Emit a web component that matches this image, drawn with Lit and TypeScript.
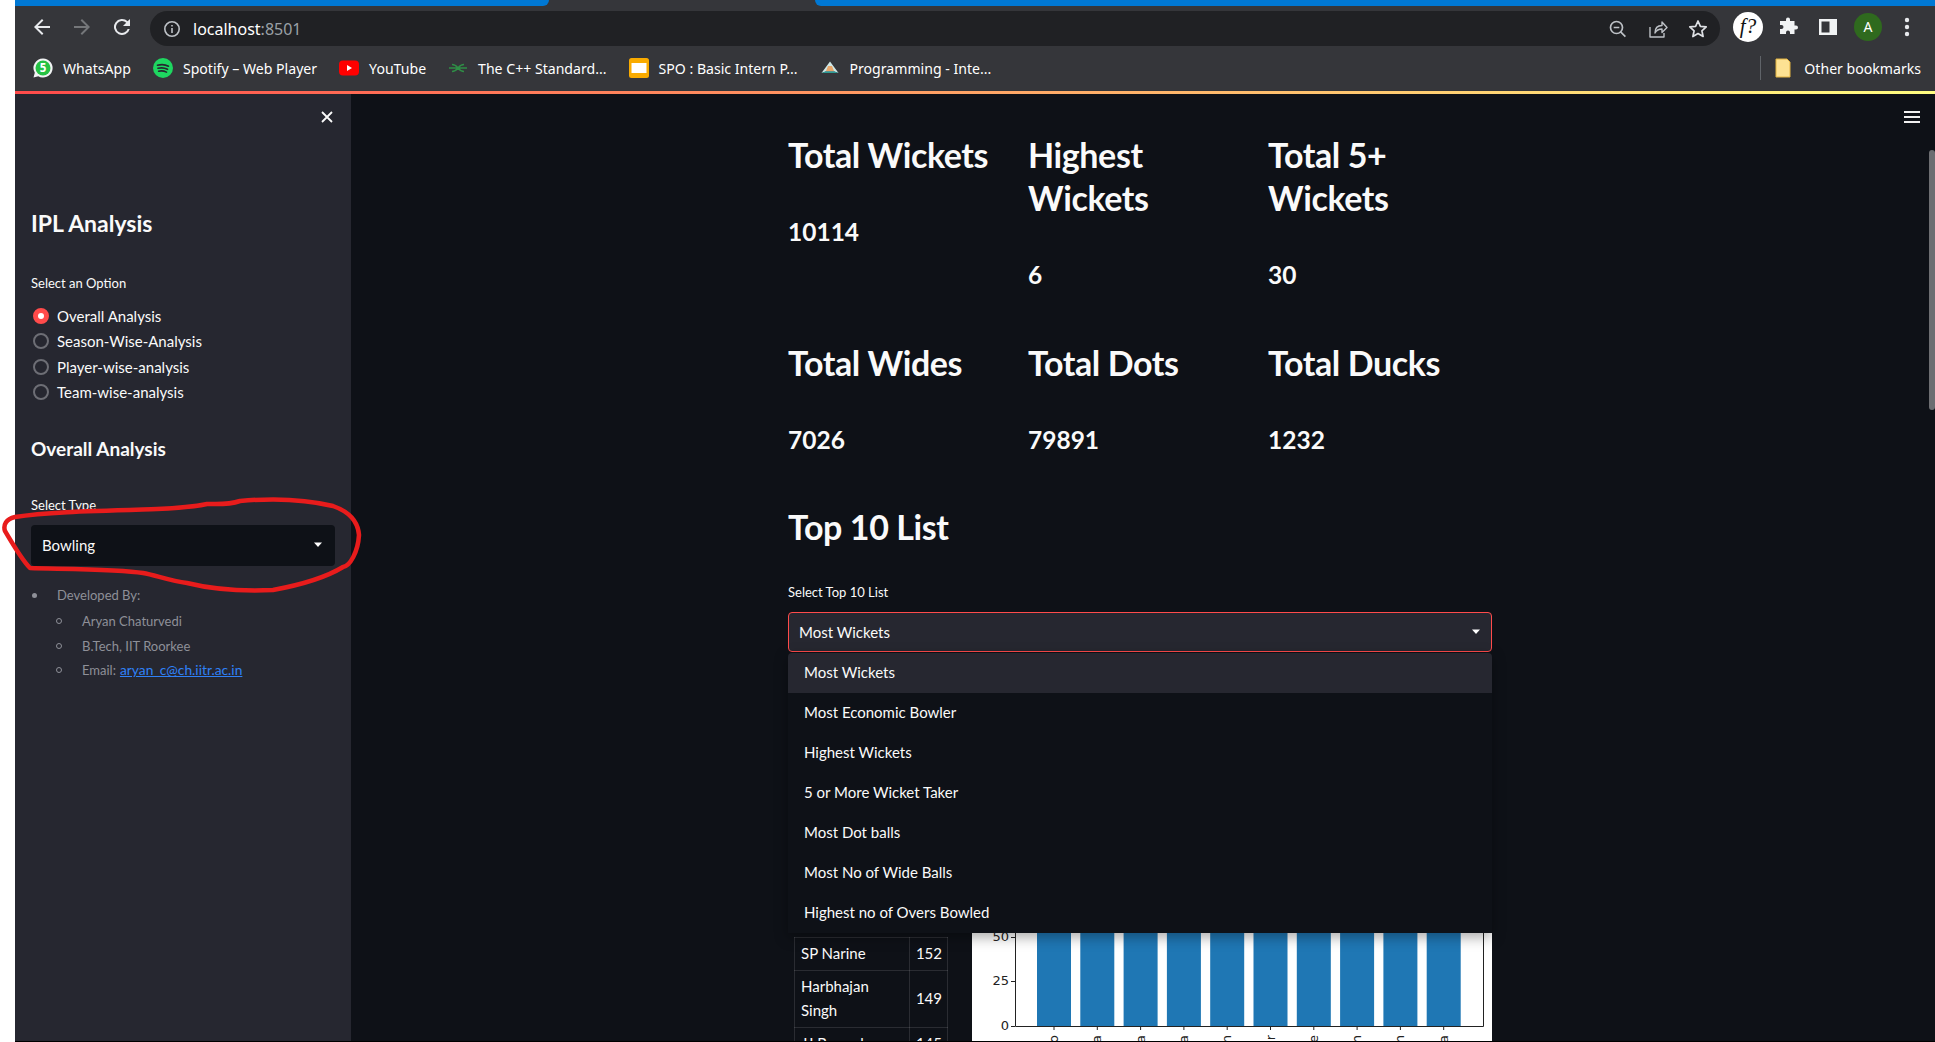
import { LitElement, html, css, svg } from 'lit';
import { customElement } from 'lit/decorators.js';

const radios = ['Overall Analysis', 'Season-Wise-Analysis', 'Player-wise-analysis', 'Team-wise-analysis'];
const options = ['Most Wickets', 'Most Economic Bowler', 'Highest Wickets', '5 or More Wicket Taker', 'Most Dot balls', 'Most No of Wide Balls', 'Highest no of Overs Bowled'];
const stats = [
	{ label: 'Total Wickets', value: '10114' },
	{ label: 'Highest Wickets', value: '6' },
	{ label: 'Total 5+ Wickets', value: '30' },
	{ label: 'Total Wides', value: '7026' },
	{ label: 'Total Dots', value: '79891' },
	{ label: 'Total Ducks', value: '1232' },
];
const players = ['DJ Bravo', 'SL Malinga', 'A Mishra', 'PP Chawla', 'R Ashwin', 'B Kumar', 'SP Narine', 'Harbhajan Singh', 'JJ Bumrah', 'RA Jadeja'];

const caret = html`<svg class="caret" width="10" height="6" viewBox="0 0 10 6"><path d="M1 0.5h8L5 5z" fill="#fff"/></svg>`;

@customElement('app-root')
export class AppRoot extends LitElement {
	static styles = css`
		:host {
			display: block;
			width: 1935px;
			height: 1042px;
			padding-left: 15px;
			box-sizing: border-box;
			background: #fff;
			overflow: hidden;
			font-family: "Lato", "Liberation Sans", sans-serif;
		}
		.frame { display: flex; flex-direction: column; height: 100%; position: relative; }

		.tabs { display: flex; justify-content: space-between; height: 6px; background: #35363a; flex: none; }
		.tab-l { width: 534px; background: #0078d4; border-bottom-right-radius: 7px; }
		.tab-r { width: 1120px; background: #0078d4; border-bottom-left-radius: 7px; }

		.toolbar { display: flex; align-items: center; height: 41px; background: #35363a; padding: 0 13px 0 15px; flex: none; }
		.nav { display: flex; gap: 16px; margin-right: 16px; }
		.nav svg { display: block; }
		.address { flex: 1; height: 35px; margin-top: 5px; margin-bottom: 1px; background: #202124; border-radius: 18px; display: flex; align-items: center; padding: 0 11px 0 13px; color: #fff; font: 16px "Noto Sans", sans-serif; }
		.address .port { color: #9aa0a6; }
		.address .host { margin-left: 12px; }
		.addr-right { margin-left: auto; display: flex; gap: 18px; }
		.ext { display: flex; gap: 10px; margin-left: 13px; align-items: center; }
		.ext-item { width: 30px; height: 30px; display: flex; align-items: center; justify-content: center; }
		.fq { background: #fff; border-radius: 50%; color: #111; font: italic 21px "Liberation Serif", serif; }
		.avatar { width: 28px; height: 28px; background: #2f6a1e; border-radius: 50%; color: #fff; font: 14px "Noto Sans", sans-serif; margin: 0 0 0 1px; }

		.bookmarks { display: flex; align-items: center; box-sizing: border-box; height: 44px; background: #35363a; padding: 0 0 2px 18px; color: #fff; font: 14.100px "Noto Sans", sans-serif; flex: none; }
		.bm { display: flex; align-items: center; gap: 10px; margin-right: 22px; white-space: nowrap; }
		.bm svg { display: block; flex: none; }
		.bm-other { margin: 0 14px 0 auto; display: flex; align-items: center; gap: 13px; }
		.bm-sep { width: 1px; height: 24px; background: #5f6368; margin-right: 1px; }

		.deco { height: 3px; flex: none; background: linear-gradient(90deg, #ff4b4b, #fffd80); }

		.workspace { flex: 1; display: flex; min-height: 0; color: #fafafa; }
		.sidebar { width: 336px; flex: none; box-sizing: border-box; background: #262730; padding: 13px 16px 0 16px; }
		.close { display: flex; justify-content: flex-end; margin-right: -2px; }
		.close svg { display: block; }
		.sb-title { margin: 81px 0 0; font-size: 23px; line-height: 30px; font-weight: 700; }
		.sb-label { font-size: 13px; line-height: 20px; }
		.sb-label.first { margin-top: 35px; }
		.radios { margin-top: 10px; }
		.radio { display: flex; align-items: center; height: 25.5px; margin-left: 2px; font-size: 15px; gap: 8px; }
		.dot { width: 16px; height: 16px; box-sizing: border-box; border-radius: 50%; border: 2px solid #6d6e75; display: flex; align-items: center; justify-content: center; }
		.dot.on { background: #ff4b4b; border-color: #ff4b4b; }
		.dot.on::after { content: ""; width: 6px; height: 6px; background: #fff; border-radius: 50%; }
		.sb-sub { margin: 31px 0 0; font-size: 19px; line-height: 26px; font-weight: 700; }
		.sb-label.second { margin-top: 33px; }
		.select { display: flex; align-items: center; justify-content: space-between; box-sizing: border-box; margin-top: 10px; border-radius: 4px; font-size: 15px; }
		.sb-select { height: 41px; background: #0e1117; padding: 0 12px 2px 11px; }
		.credits { list-style: none; margin: 19px 0 0; padding: 0; color: #8e9098; font-size: 13px; line-height: 20px; }
		.credits li { display: flex; align-items: center; }
		.credits .lead { height: 20px; }
		.credits .lead::before { content: ""; width: 5px; height: 5px; border-radius: 50%; background: #8e9098; margin: 0 20px 0 1px; }
		.credits .sub { height: 24.5px; }
		.credits .sub::before { content: ""; width: 6px; height: 6px; box-sizing: border-box; border-radius: 50%; border: 1.5px solid #8e9098; margin: 0 20px 0 25px; }
		.credits .first-sub { margin-top: 4px; }
		.credits a { color: #2f81f7; text-decoration: underline; margin-left: 4px; font-size: 13.800px; }

		.main { flex: 1; position: relative; background: #0e1117; overflow: hidden; }
		.content { width: 704px; margin-left: 437px; padding-top: 39px; }
		.stats { display: grid; grid-template-columns: repeat(3, 1fr); column-gap: 16px; row-gap: 51px; }
		.stat h2 { margin: 0; font-size: 34px; line-height: 43px; font-weight: 700; letter-spacing: -0.4px; }
		.stat p { margin: 41px 0 0; font-size: 24.500px; line-height: 30px; font-weight: 700; }
		.top { margin: 50px 0 0; font-size: 34px; line-height: 43px; font-weight: 700; letter-spacing: -0.4px; }
		.top-label { margin-top: 34px; font-size: 13px; line-height: 20px; }
		.top-select { height: 40px; background: #262730; border: 1px solid #ff4b4b; padding: 0 10px 0 10px; }
		.options { position: relative; z-index: 1; margin-top: 1px; background: #0e1117; border-radius: 4px 4px 0 0; box-shadow: 0 4px 14px rgba(0, 0, 0, 0.35); overflow: hidden; }
		.option { box-sizing: border-box; height: 40px; display: flex; align-items: center; padding: 0 0 2px 16px; font-size: 15px; }
		.option.on { background: #262730; }
		.result { display: flex; justify-content: space-between; align-items: flex-start; }
		table { border-collapse: collapse; margin: 4px 0 0 6px; width: 154px; font-size: 15px; line-height: 24px; }
		td { border: 1px solid rgba(250, 250, 250, 0.12); padding: 3px 5px 5px 6px; }
		td:last-child { width: 26px; text-align: right; }
		.chart { display: block; background: #fff; }
		.chart text { font-family: "DejaVu Sans", sans-serif; font-size: 13px; fill: #222; }

		.menu { position: absolute; top: 17px; right: 15px; display: block; }
		.scroll { position: absolute; top: 56px; right: 0; width: 6px; height: 260px; background: #6d6e72; border-radius: 3px; }
		.base { position: absolute; left: 0; right: 0; bottom: 0; height: 1px; background: #000; z-index: 2; }
		.circle { position: absolute; left: -15px; top: 0; width: 400px; height: 700px; pointer-events: none; z-index: 3; }
	`;

	render() {
		return html`
			<div class="frame">
				<div class="tabs"><div class="tab-l"></div><div class="tab-r"></div></div>
				${this.renderToolbar()}
				${this.renderBookmarks()}
				<div class="deco"></div>
				<div class="workspace">
					${this.renderSidebar()}
					${this.renderMain()}
				</div>
				<div class="base"></div>
				<svg class="circle" viewBox="0 0 400 700">
					<path d="M15 517C45 512 90 511 157 509C180 508 197 506 207 504C220 504 228 505 240 501C262 499 300 498 333 506C350 512 358 522 359 535C358 552 350 566 343 567C325 578 300 585 273 590C250 591 215 590 187 583C170 581 155 575 143 573C120 569 60 569 30 568C22 560 15 548 5 531C3 525 6 519 15 517Z" fill="none" stroke="#e81c1c" stroke-width="4.500" stroke-linejoin="round"/>
				</svg>
			</div>
		`;
	}

	renderToolbar() {
		return html`
			<div class="toolbar">
				<div class="nav">
					<svg width="24" height="24" viewBox="0 0 24 24"><path d="M20 11H7.8l5.6-5.6L12 4l-8 8 8 8 1.4-1.4L7.8 13H20z" fill="#e8eaed"/></svg>
					<svg width="24" height="24" viewBox="0 0 24 24"><path d="M4 11h12.2l-5.6-5.6L12 4l8 8-8 8-1.4-1.4 5.6-5.6H4z" fill="#75777a"/></svg>
					<svg width="24" height="24" viewBox="0 0 24 24"><path d="M17.65 6.35A8 8 0 1 0 19.74 14h-2.08a6 6 0 1 1-1.42-6.24L13 11h7V4z" fill="#e8eaed"/></svg>
				</div>
				<div class="address">
					<svg width="18" height="18" viewBox="0 0 18 18"><circle cx="9" cy="9" r="7.2" fill="none" stroke="#bdc1c6" stroke-width="1.6"/><path d="M8.2 8h1.6v5H8.2zM8.2 5h1.6v1.6H8.2z" fill="#bdc1c6"/></svg>
					<span class="host">localhost<span class="port">:8501</span></span>
					<div class="addr-right">
						<svg width="22" height="22" viewBox="0 0 22 22"><circle cx="9.5" cy="9.5" r="6" fill="none" stroke="#bdc1c6" stroke-width="1.7"/><path d="M6.7 8.7h5.6v1.6H6.7zM14 13l5 5-1.2 1.2-5-5z" fill="#bdc1c6"/></svg>
						<svg width="22" height="22" viewBox="0 0 22 22"><path d="M3 9v10h14v-4M8 15c0-5 3-7.500 7-7.500V4l5 5.500-5 5V11c-3 0-5.500 1-7 4z" fill="none" stroke="#bdc1c6" stroke-width="1.4" stroke-linejoin="round"/></svg>
						<svg width="22" height="22" viewBox="0 0 22 22"><path d="M11 3l2.400 5.300 5.800.6-4.300 3.900 1.200 5.700L11 15.600l-5.100 2.900 1.200-5.700-4.300-3.900 5.800-.6z" fill="none" stroke="#dfe1e5" stroke-width="1.7" stroke-linejoin="round"/></svg>
					</div>
				</div>
				<div class="ext">
					<div class="ext-item fq">f?</div>
					<div class="ext-item">
						<svg width="20" height="20" viewBox="0 0 20 20"><path d="M8 2.500a2 2 0 0 1 4 0V4h4.500v4.500H18a2 2 0 0 1 0 4h-1.500V17H12v-1.500a2 2 0 0 0-4 0V17H2v-5h1.500a2 2 0 0 0 0-4H2V4h6z" fill="#f1f3f4"/></svg>
					</div>
					<div class="ext-item">
						<svg width="20" height="20" viewBox="0 0 20 20"><path d="M1 2h18v16H1z" fill="#f1f3f4"/><path d="M3.500 4.500h8v11h-8z" fill="#35363a"/></svg>
					</div>
					<div class="ext-item avatar">A</div>
					<div class="ext-item">
						<svg width="6" height="20" viewBox="0 0 6 20"><circle cx="3" cy="3" r="2.200" fill="#e8eaed"/><circle cx="3" cy="10" r="2.200" fill="#e8eaed"/><circle cx="3" cy="17" r="2.200" fill="#e8eaed"/></svg>
					</div>
				</div>
			</div>
		`;
	}

	renderBookmarks() {
		return html`
			<div class="bookmarks">
				<div class="bm">
					<svg width="20" height="20" viewBox="0 0 20 20"><path d="M10 0.500a9.500 9.500 0 1 1-4.700 17.700L0.500 19.500l1.300-4.700A9.500 9.500 0 0 1 10 0.500z" fill="#f1f3f4"/><circle cx="10" cy="10" r="7.500" fill="#25c244"/><text x="10" y="14" text-anchor="middle" font-size="11.500" font-weight="700" fill="#fff" font-family="Noto Sans">5</text></svg>
					WhatsApp
				</div>
				<div class="bm">
					<svg width="20" height="20" viewBox="0 0 20 20"><circle cx="10" cy="10" r="10" fill="#1ed760"/><path d="M4.500 7.200c3.800-1 7.700-.8 11 1M5 10.300c3.200-.8 6.500-.6 9.500 1M5.600 13.200c2.700-.6 5.300-.4 7.900.9" fill="none" stroke="#262730" stroke-width="1.600" stroke-linecap="round"/></svg>
					Spotify – Web Player
				</div>
				<div class="bm">
					<svg width="20" height="20" viewBox="0 0 20 20"><rect y="2.500" width="20" height="15" rx="4" fill="#f00"/><path d="M8 7l5 3-5 3z" fill="#fff"/></svg>
					YouTube
				</div>
				<div class="bm">
					<svg width="20" height="20" viewBox="0 0 20 20"><path d="M1 10h18M4 6.500c3 0 4.500 1.500 6 3.500 1.500 2 3 3.500 6 3.500M4 13.500c3 0 4.500-1.500 6-3.500 1.500-2 3-3.500 6-3.500" fill="none" stroke="#2f8d46" stroke-width="1.300"/></svg>
					The C++ Standard...
				</div>
				<div class="bm">
					<svg width="20" height="20" viewBox="0 0 20 20"><rect width="20" height="20" rx="2.500" fill="#f9ab00"/><rect x="2.500" y="5" width="15" height="10" fill="#fff"/></svg>
					SPO : Basic Intern P...
				</div>
				<div class="bm">
					<svg width="20" height="20" viewBox="0 0 20 20"><path d="M10 3.500l8.500 11.500-4-1.500H5.500L1.500 15z" fill="#cfe8e6"/><path d="M8 8h4l2 5H6z" fill="#e8a66a"/><path d="M1.500 15l4-1.500h9l4 1.500z" fill="#2f9c95"/></svg>
					Programming - Inte...
				</div>
				<div class="bm-other">
					<div class="bm-sep"></div>
					<svg width="16" height="20" viewBox="0 0 16 20"><path d="M1 1h11l3 3v15H1z" fill="#fde293" stroke="#e3b341" stroke-width="1"/></svg>
					Other bookmarks
				</div>
			</div>
		`;
	}

	renderSidebar() {
		return html`
			<aside class="sidebar">
				<div class="close">
					<svg width="20" height="20" viewBox="0 0 20 20"><path d="M5 5l10 10M15 5L5 15" stroke="#fafafa" stroke-width="1.800"/></svg>
				</div>
				<h1 class="sb-title">IPL Analysis</h1>
				<div class="sb-label first">Select an Option</div>
				<div class="radios">
					${radios.map((r, i) => html`<div class="radio"><span class="dot ${i === 0 ? 'on' : ''}"></span>${r}</div>`)}
				</div>
				<h2 class="sb-sub">Overall Analysis</h2>
				<div class="sb-label second">Select Type</div>
				<div class="select sb-select">Bowling ${caret}</div>
				<ul class="credits">
					<li class="lead">Developed By:</li>
					<li class="sub first-sub">Aryan Chaturvedi</li>
					<li class="sub">B.Tech, IIT Roorkee</li>
					<li class="sub">Email:<a href="#">aryan_c@ch.iitr.ac.in</a></li>
				</ul>
			</aside>
		`;
	}

	renderMain() {
		return html`
			<main class="main">
				<div class="content">
					<div class="stats">
						${stats.map(s => html`<div class="stat"><h2>${s.label}</h2><p>${s.value}</p></div>`)}
					</div>
					<h2 class="top">Top 10 List</h2>
					<div class="top-label">Select Top 10 List</div>
					<div class="select top-select">Most Wickets ${caret}</div>
					<div class="options">
						${options.map((o, i) => html`<div class="option ${i === 0 ? 'on' : ''}">${o}</div>`)}
					</div>
					<div class="result">
						<table>
							<tr><td>SP Narine</td><td>152</td></tr>
							<tr><td>Harbhajan Singh</td><td>149</td></tr>
							<tr><td>JJ Bumrah</td><td>145</td></tr>
						</table>
						${this.renderChart()}
					</div>
				</div>
				<svg class="menu" width="16" height="12" viewBox="0 0 16 12"><path d="M0 1h16M0 6h16M0 11h16" stroke="#f0f0f0" stroke-width="1.800"/></svg>
				<div class="scroll"></div>
			</main>
		`;
	}

	renderChart() {
		return html`
			<svg class="chart" width="520" height="109" viewBox="0 0 520 109">
				${players.map((p, i) => {
					const x = 65 + i * 43.3;
					return svg`
						<rect x=${x} y="0" width="34" height="93" fill="#1f77b4"/>
						<path d="M${x + 17} 93v4" stroke="#222" stroke-width="1"/>
						<text transform="translate(${x + 21} 102) rotate(-90)" text-anchor="end">${p}</text>
					`;
				})}
				<path d="M43.500 0V93.500H511.500V0" fill="none" stroke="#222" stroke-width="1"/>
				<path d="M39 4.500h4M39 48.500h4M39 93.500h4" stroke="#222" stroke-width="1"/>
				<text x="37" y="8" text-anchor="end">50</text>
				<text x="37" y="52" text-anchor="end">25</text>
				<text x="37" y="97" text-anchor="end">0</text>
			</svg>
		`;
	}
}
